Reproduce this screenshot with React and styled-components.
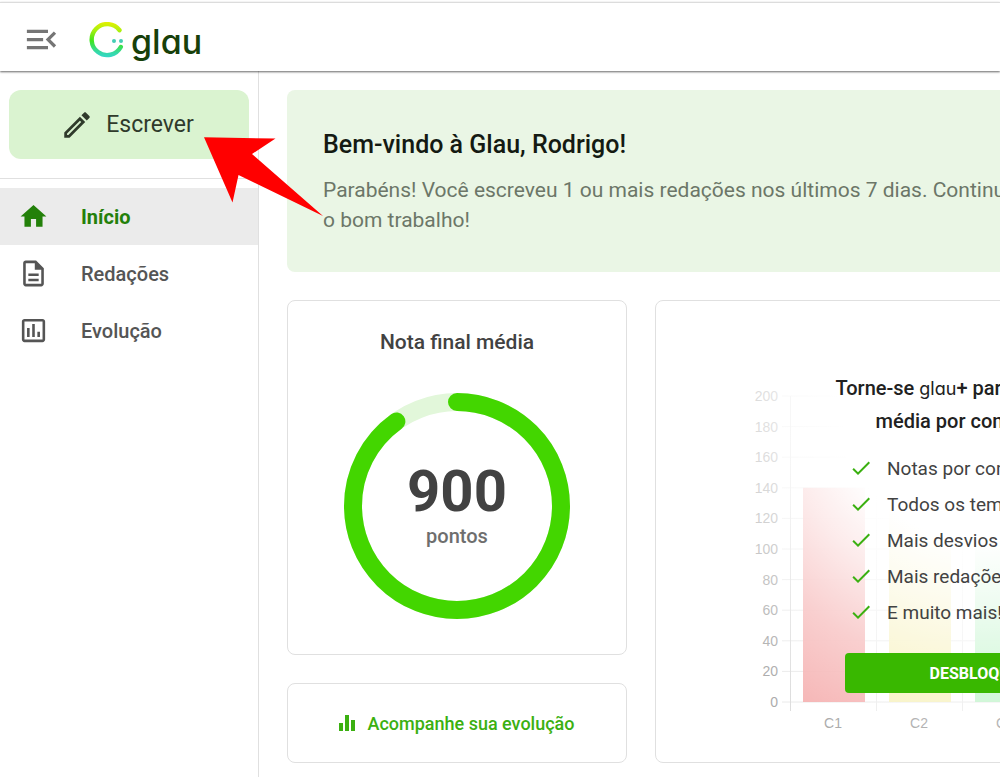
import styled, { createGlobalStyle } from 'styled-components';
import {
  MdMenuOpen,
  MdOutlineEdit,
  MdHome,
  MdOutlineAssessment,
  MdEqualizer,
  MdCheck,
} from 'react-icons/md';

// outlined document with a filled corner
const DocumentIcon = ({ size }) => (
  <svg width={size} height={size} viewBox="0 0 24 24" fill="currentColor">
    <path d="M14 2H6C4.900 2 4 2.900 4 4V20C4 21.100 4.900 22 6 22H18C19.100 22 20 21.100 20 20V8ZM18 20H6V4H13V9H18Z" />
    <path d="M8 16H16V18H8ZM8 12H16V14H8Z" />
  </svg>
);

const navItems = [
  { label: 'Início', icon: MdHome, active: true },
  { label: 'Redações', icon: DocumentIcon },
  { label: 'Evolução', icon: MdOutlineAssessment },
];

const benefits = [
  'Notas por competência',
  'Todos os temas',
  'Mais desvios',
  'Mais redações',
  'E muito mais!',
];

const scores = [
  { label: 'C1', value: 140, color: '#f4a6a6' },
  { label: 'C2', value: 160, color: '#f6efb4' },
  { label: 'C3', value: 120, color: '#b9f3c4' },
  { label: 'C4', value: 160, color: '#b4d8f6' },
  { label: 'C5', value: 140, color: '#d9bdf2' },
];

const Logo = () => (
  <LogoLink href="#inicio" aria-label="glau">
    <svg width="36" height="36" viewBox="0 0 36 36" fill="none">
      <defs>
        <linearGradient id="ring" x1="22" y1="0" x2="20" y2="36" gradientUnits="userSpaceOnUse">
          <stop offset="0" stopColor="#e6f000" />
          <stop offset="0.25" stopColor="#a8f010" />
          <stop offset="0.55" stopColor="#3fe51c" />
          <stop offset="0.85" stopColor="#35d9a8" />
          <stop offset="1" stopColor="#35d6cc" />
        </linearGradient>
      </defs>
      <path
        d="M30.5 8.2A15.5 15.5 0 1 0 31.8 25"
        stroke="url(#ring)"
        strokeWidth="4.4"
        strokeLinecap="round"
      />
      <circle cx="25" cy="19" r="2" fill="#45cdb4" />
      <circle cx="32" cy="19" r="2" fill="#45cdb4" />
    </svg>
    <Wordmark>glau</Wordmark>
  </LogoLink>
);

const ScoreRing = ({ score, max }) => {
  const radius = 104;
  const length = 2 * Math.PI * radius;
  return (
    <Ring>
      <svg width="226" height="226" viewBox="0 0 226 226" fill="none" strokeWidth="18">
        <circle cx="113" cy="113" r={radius} stroke="#e2f7da" />
        <circle
          cx="113"
          cy="113"
          r={radius}
          stroke="#43d600"
          strokeLinecap="round"
          strokeDasharray={`${(length * score) / max} ${length}`}
          transform="rotate(-90 113 113)"
        />
      </svg>
      <RingText>
        <strong>{score}</strong>
        <span>pontos</span>
      </RingText>
    </Ring>
  );
};

const ScoreChart = () => {
  const left = 42;
  const base = 316;
  const column = 86;
  const y = (value) => base - (value / 200) * 306;
  const ticks = Array.from({ length: 11 }, (_, i) => i * 20);
  return (
    <svg width="480" height="350" viewBox="0 0 480 350">
      {ticks.map((tick) => (
        <g key={tick}>
          <line x1={left - 8} x2={left + column * 5} y1={y(tick)} y2={y(tick)} stroke="#e8e8e8" />
          <text x={left - 12} y={y(tick) + 5} textAnchor="end">
            {tick}
          </text>
        </g>
      ))}
      {scores.map((score, i) => (
        <g key={score.label}>
          <line
            x1={left + column * i + 0.5}
            x2={left + column * i + 0.5}
            y1={y(200)}
            y2={base + 9}
            stroke={i === 0 ? '#dadada' : '#ebebeb'}
          />
          <rect
            x={left + column * i + 13}
            y={y(score.value)}
            width="62"
            height={base - y(score.value)}
            fill={score.color}
            fillOpacity="0.9"
          />
          <text x={left + column * i + 43} y={base + 26} textAnchor="middle">
            {score.label}
          </text>
        </g>
      ))}
    </svg>
  );
};

const App = () => {
  return (
    <>
      <GlobalStyle />
      <Page>
        <Header>
          <IconButton type="button" aria-label="Recolher menu">
            <MdMenuOpen size={39} />
          </IconButton>
          <Logo />
        </Header>
        <Body>
          <Sidebar>
            <WriteWrapper>
              <WriteButton type="button">
                <MdOutlineEdit size={34} />
                Escrever
              </WriteButton>
            </WriteWrapper>
            <nav>
              {navItems.map(({ label, icon: Icon, active }) => (
                <NavLink key={label} href={`#${label}`} $active={active}>
                  <Icon size={31} />
                  {label}
                </NavLink>
              ))}
            </nav>
          </Sidebar>
          <Main>
            <Banner>
              <h1>Bem-vindo à Glau, Rodrigo!</h1>
              <p>
                Parabéns! Você escreveu 1 ou mais redações nos últimos 7 dias. Continue
                <br />o bom trabalho!
              </p>
            </Banner>
            <Cards>
              <Column>
                <Card>
                  <CardTitle>Nota final média</CardTitle>
                  <ScoreRing score={900} max={1000} />
                </Card>
                <ProgressLink href="#evolucao">
                  <MdEqualizer size={24} />
                  Acompanhe sua evolução
                </ProgressLink>
              </Column>
              <LockedCard>
                <ChartArea>
                  <ScoreChart />
                </ChartArea>
                <Fade />
                <Offer>
                  <h2>
                    Torne-se <Brand>glau</Brand>+ para ver sua nota
                    <br />
                    média por competência
                  </h2>
                  <ul>
                    {benefits.map((benefit) => (
                      <li key={benefit}>
                        <MdCheck size={24} />
                        {benefit}
                      </li>
                    ))}
                  </ul>
                  <UnlockButton type="button">DESBLOQUEIE</UnlockButton>
                </Offer>
              </LockedCard>
            </Cards>
          </Main>
        </Body>
        <Pointer width="120" height="80" viewBox="0 0 120 80" aria-hidden="true">
          <path d="M0 0.3L71.5 1.5L48 17L119 79L34.5 38L28.5 65.5Z" fill="#ff0000" />
        </Pointer>
      </Page>
    </>
  );
};

const GlobalStyle = createGlobalStyle`
  * {
    box-sizing: border-box;
  }
  body {
    margin: 0;
    background: #fff;
    font-family: Roboto, 'Liberation Sans', sans-serif;
  }
  h1, h2, p, ul {
    margin: 0;
    padding: 0;
    font-weight: 400;
  }
  button {
    font-family: inherit;
    border: none;
    padding: 0;
    cursor: pointer;
  }
  a {
    text-decoration: none;
  }
  svg {
    display: block;
    flex-shrink: 0;
  }
`;

const Page = styled.div`
  position: relative;
  display: flex;
  flex-direction: column;
  min-height: 100vh;
  overflow: hidden;
`;

const Header = styled.header`
  display: flex;
  align-items: center;
  gap: 28px;
  height: 69px;
  margin-top: 2px;
  padding: 5px 22px 0;
  border-top: 1px solid #dcdcdc;
  background: #fff;
  box-shadow: 0 1px 2px rgba(0, 0, 0, 0.6);
  z-index: 1;
`;

const IconButton = styled.button`
  background: none;
  color: #757575;
`;

const LogoLink = styled.a`
  display: flex;
  align-items: center;
  gap: 6px;
`;

const Wordmark = styled.span`
  padding-top: 4px;
  font-family: Inter, sans-serif;
  font-feature-settings: 'cv11';
  font-size: 34px;
  line-height: 40px;
  font-weight: 500;
  color: #17400a;
`;

const Body = styled.div`
  display: grid;
  grid-template-columns: 259px 1fr;
  flex: 1;
`;

const Sidebar = styled.aside`
  border-right: 1px solid #e0e0e0;
`;

const WriteWrapper = styled.div`
  padding: 19px 9px;
  margin-bottom: 9px;
  border-bottom: 1px solid #e0e0e0;
`;

const WriteButton = styled.button`
  display: flex;
  align-items: center;
  justify-content: center;
  gap: 12px;
  width: 100%;
  height: 69px;
  padding-right: 4px;
  border-radius: 12px;
  background: #daf3d0;
  color: #2f3a2b;
  font-size: 23px;
`;

const NavLink = styled.a`
  display: flex;
  align-items: center;
  gap: 32px;
  height: 57px;
  padding-left: 18px;
  background: ${({ $active }) => ($active ? '#ebebeb' : 'transparent')};
  color: ${({ $active }) => ($active ? '#23800a' : '#555')};
  font-size: 20px;
  font-weight: ${({ $active }) => ($active ? 700 : 500)};
`;

const Main = styled.main`
  display: flex;
  flex-direction: column;
  gap: 28px;
  min-width: 1076px;
  padding: 19px 28px 14px;
`;

const Banner = styled.section`
  padding: 37px 36px;
  border-radius: 8px;
  background: #eaf6e5;
  h1 {
    margin-bottom: 12px;
    font-size: 25px;
    line-height: 36px;
    font-weight: 500;
    color: #141a12;
  }
  p {
    font-size: 21px;
    line-height: 30px;
    color: #6c7668;
  }
`;

const Cards = styled.div`
  display: grid;
  grid-template-columns: 1fr 652px;
  gap: 28px;
`;

const Column = styled.div`
  display: grid;
  gap: 28px;
`;

const Card = styled.section`
  display: flex;
  flex-direction: column;
  align-items: center;
  gap: 36px;
  padding: 26px 24px 35px;
  border: 1px solid #e0e0e0;
  border-radius: 8px;
`;

const CardTitle = styled.h2`
  font-size: 21px;
  line-height: 30px;
  font-weight: 500;
  color: #424242;
`;

const Ring = styled.div`
  display: grid;
  place-items: center;
  > * {
    grid-area: 1 / 1;
  }
`;

const RingText = styled.div`
  display: flex;
  flex-direction: column;
  align-items: center;
  strong {
    font-size: 58px;
    line-height: 60px;
    color: #424242;
  }
  span {
    font-size: 20px;
    line-height: 30px;
    font-weight: 500;
    color: #6e6e6e;
  }
`;

const ProgressLink = styled.a`
  display: flex;
  align-items: center;
  justify-content: center;
  gap: 8px;
  height: 80px;
  padding-right: 4px;
  border: 1px solid #e0e0e0;
  border-radius: 8px;
  color: #3bb011;
  font-size: 18px;
  font-weight: 500;
`;

const LockedCard = styled.section`
  display: grid;
  border: 1px solid #e0e0e0;
  border-radius: 8px;
  overflow: hidden;
  > * {
    grid-area: 1 / 1;
  }
`;

const ChartArea = styled.div`
  padding: 85px 0 0 92px;
  text {
    font-family: 'Liberation Sans', sans-serif;
    font-size: 14px;
    fill: #a3a3a3;
  }
`;

const Fade = styled.div`
  background: radial-gradient(
    circle at 50% 100px,
    #fff 140px,
    rgba(255, 255, 255, 0.75) 200px,
    rgba(255, 255, 255, 0.4) 270px,
    rgba(255, 255, 255, 0.1) 350px
  );
`;

const Offer = styled.div`
  justify-self: center;
  width: 272px;
  padding-top: 71px;
  h2 {
    display: flow-root;
    margin: 0 -20px 12px;
    font-size: 20px;
    line-height: 33px;
    font-weight: 500;
    text-align: center;
    white-space: nowrap;
    color: #212121;
  }
  ul {
    margin-bottom: 23px;
    list-style: none;
  }
  li {
    display: flex;
    align-items: center;
    gap: 14px;
    height: 36px;
    padding-left: 4px;
    font-size: 19px;
    color: #424242;
    white-space: nowrap;
  }
  li svg {
    color: #3bb011;
  }
`;

const Brand = styled.span`
  font-family: Inter, sans-serif;
  font-feature-settings: 'cv11';
  font-size: 18px;
  font-weight: 400;
`;

const UnlockButton = styled.button`
  width: 100%;
  height: 40px;
  border-radius: 4px;
  background: #39b800;
  color: #fff;
  font-size: 16px;
  font-weight: 700;
`;

// red arrow floating over the page, pointing at the write button
const Pointer = styled.svg`
  position: absolute;
  top: 137px;
  left: 204px;
  pointer-events: none;
  z-index: 2;
`;

export default App;
